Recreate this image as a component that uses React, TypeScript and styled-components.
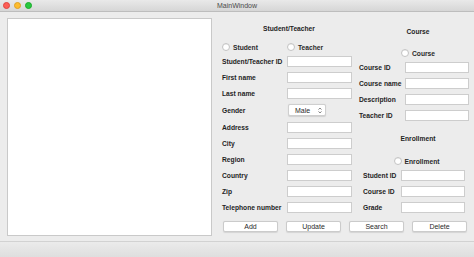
import React from 'react';
import styled, { createGlobalStyle } from 'styled-components';

const Global = createGlobalStyle`
  html, body {
    margin: 0;
    padding: 0;
    width: 474px;
    height: 257px;
    overflow: hidden;
    background: #ececec;
  }
  * { box-sizing: border-box; }
`;

const Window = styled.div`
  width: 474px;
  height: 257px;
  display: flex;
  flex-direction: column;
  background: #ececec;
  font-family: 'Liberation Sans', Arial, sans-serif;
  color: #1e1e1e;
`;

const TitleBar = styled.div`
  height: 12px;
  display: flex;
  align-items: center;
  position: relative;
  background: linear-gradient(#e9e9e9, #d6d6d6);
  border-bottom: 1px solid #bdbdbd;
  padding-left: 3px;
  gap: 4px;
`;

const Light = styled.span<{ $color: string; $border: string }>`
  width: 7px;
  height: 7px;
  border-radius: 50%;
  background: ${p => p.$color};
  border: 0.5px solid ${p => p.$border};
`;

const WindowTitle = styled.span`
  position: absolute;
  left: 0;
  right: 0;
  text-align: center;
  font-size: 7px;
  color: #4a4a4a;
  line-height: 12px;
`;

const Body = styled.div`
  flex: 1;
  display: flex;
  padding: 6px 0 0 7px;
`;

const ListBox = styled.div`
  width: 205px;
  height: 218px;
  background: #fff;
  border: 1px solid #c9c9c9;
`;

const FormArea = styled.div`
  flex: 1;
  display: flex;
  flex-direction: column;
`;

const Columns = styled.div`
  display: flex;
`;

const Column = styled.div<{ $width: number; $pad: number }>`
  width: ${p => p.$width}px;
  padding-left: ${p => p.$pad}px;
  display: flex;
  flex-direction: column;
`;

const GroupTitle = styled.div<{ $top: number; $shift?: number }>`
  margin-top: ${p => p.$top}px;
  height: 10px;
  line-height: 10px;
  font-size: 6.7px;
  font-weight: bold;
  text-align: center;
  padding-left: ${p => p.$shift ?? 0}px;
`;

const RadioRow = styled.div<{ $top: number; $shift?: number }>`
  margin-top: ${p => p.$top}px;
  height: 10px;
  display: flex;
  align-items: center;
  justify-content: center;
  padding-left: ${p => p.$shift ?? 0}px;
`;

const RadioGrid = styled.div`
  margin-top: 8px;
  height: 10px;
  display: grid;
  grid-template-columns: 65px 65px;
  align-items: center;
`;

const RadioLabel = styled.label`
  display: flex;
  align-items: center;
  gap: 3px;
  font-size: 6.7px;
  font-weight: bold;
  color: #2a2a2a;
`;

const Circle = styled.span`
  width: 8px;
  height: 8px;
  border-radius: 50%;
  background: #fff;
  border: 1px solid #c4c4c4;
  box-shadow: inset 0 0.5px 0 #e0e0e0;
`;

const Form = styled.div<{ $label: number; $input: number; $indent?: number }>`
  display: grid;
  grid-template-columns: ${p => p.$label}px ${p => p.$input}px;
  margin-top: 1px;
  padding-left: ${p => p.$indent ?? 0}px;
`;

const Label = styled.span<{ $h?: number }>`
  height: ${p => p.$h ?? 16}px;
  display: flex;
  align-items: center;
  font-size: 6.7px;
  font-weight: bold;
  white-space: nowrap;
  color: #1e1e1e;
`;

const Cell = styled.div<{ $h?: number }>`
  height: ${p => p.$h ?? 16}px;
  display: flex;
  align-items: center;
`;

const Input = styled.div`
  width: 100%;
  height: 11px;
  background: #fff;
  border: 1px solid #cdcdcd;
`;

const Select = styled.div`
  width: 38px;
  height: 12px;
  background: #fff;
  border: 1px solid #cfcfcf;
  border-radius: 2px;
  box-shadow: 0 0.5px 1px rgba(0, 0, 0, 0.12);
  display: flex;
  align-items: center;
  justify-content: space-between;
  padding: 0 3px 0 6px;
  font-size: 7px;
  color: #2a2a2a;
  margin-left: 1px;
`;

const Buttons = styled.div`
  display: flex;
  gap: 8px;
  margin-top: 6px;
  padding-left: 11px;
`;

const Button = styled.div`
  width: 55px;
  height: 11px;
  background: #fff;
  border: 1px solid #cbcbcb;
  border-radius: 2px;
  box-shadow: 0 0.5px 1px rgba(0, 0, 0, 0.1);
  font-size: 7px;
  line-height: 9px;
  text-align: center;
  color: #2a2a2a;
`;

const StatusBar = styled.div`
  height: 16px;
  background: linear-gradient(#ebebeb, #dedede);
  border-top: 1px solid #d2d2d2;
`;

type Row = { label: string; kind?: 'select' };

const personRows: Row[] = [
  { label: 'Student/Teacher ID' },
  { label: 'First name' },
  { label: 'Last name' },
  { label: 'Gender', kind: 'select' },
  { label: 'Address' },
  { label: 'City' },
  { label: 'Region' },
  { label: 'Country' },
  { label: 'Zip' },
  { label: 'Telephone number' },
];

const courseRows = ['Course ID', 'Course name', 'Description', 'Teacher ID'];
const enrollRows = ['Student ID', 'Course ID', 'Grade'];

const Stepper = () => (
  <svg width="4" height="7" viewBox="0 0 4 7">
    <path d="M0.5 2.6 L2 1 L3.5 2.6 M0.5 4.4 L2 6 L3.5 4.4" fill="none" stroke="#555" strokeWidth="0.7" />
  </svg>
);

const App: React.FC = () => (
  <Window>
    <Global />
    <TitleBar>
      <Light $color="#fd5f57" $border="#e0443e" />
      <Light $color="#febc2e" $border="#dea123" />
      <Light $color="#28c840" $border="#1aab29" />
      <WindowTitle>MainWindow</WindowTitle>
    </TitleBar>
    <Body>
      <ListBox />
      <FormArea>
        <Columns>
          <Column $width={144} $pad={10}>
            <GroupTitle $top={6}>Student/Teacher</GroupTitle>
            <RadioGrid>
              <RadioLabel><Circle />Student</RadioLabel>
              <RadioLabel><Circle />Teacher</RadioLabel>
            </RadioGrid>
            <Form $label={65} $input={65}>
              {personRows.map(r => (
                <React.Fragment key={r.label}>
                  <Label $h={r.kind ? 18 : 16}>{r.label}</Label>
                  <Cell $h={r.kind ? 18 : 16}>
                    {r.kind ? (
                      <Select>Male<Stepper /></Select>
                    ) : (
                      <Input />
                    )}
                  </Cell>
                </React.Fragment>
              ))}
            </Form>
          </Column>
          <Column $width={118} $pad={3}>
            <GroupTitle $top={9} $shift={3}>Course</GroupTitle>
            <RadioRow $top={11} $shift={3}>
              <RadioLabel><Circle />Course</RadioLabel>
            </RadioRow>
            <Form $label={46} $input={64}>
              {courseRows.map(l => (
                <React.Fragment key={l}>
                  <Label>{l}</Label>
                  <Cell><Input /></Cell>
                </React.Fragment>
              ))}
            </Form>
            <GroupTitle $top={11} $shift={3}>Enrollment</GroupTitle>
            <RadioRow $top={12}>
              <RadioLabel><Circle />Enrollment</RadioLabel>
            </RadioRow>
            <Form $label={38} $input={64} $indent={4}>
              {enrollRows.map(l => (
                <React.Fragment key={l}>
                  <Label>{l}</Label>
                  <Cell><Input /></Cell>
                </React.Fragment>
              ))}
            </Form>
          </Column>
        </Columns>
        <Buttons>
          <Button>Add</Button>
          <Button>Update</Button>
          <Button>Search</Button>
          <Button>Delete</Button>
        </Buttons>
      </FormArea>
    </Body>
    <StatusBar />
  </Window>
);

export default App;
